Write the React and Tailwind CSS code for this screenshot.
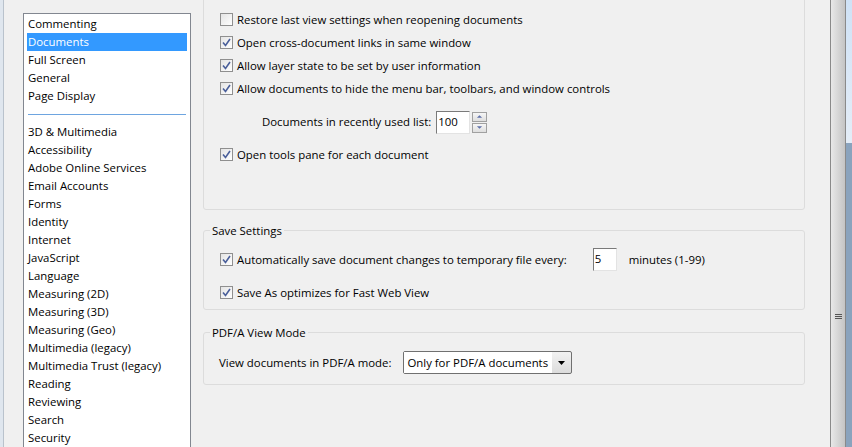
import React from "react";

const font = { fontFamily: '"Open Sans", "Noto Sans", "Liberation Sans", sans-serif' };

const top = ["Commenting", "Documents", "Full Screen", "General", "Page Display"];
const rest = [
  "3D & Multimedia", "Accessibility", "Adobe Online Services", "Email Accounts", "Forms",
  "Identity", "Internet", "JavaScript", "Language", "Measuring (2D)", "Measuring (3D)",
  "Measuring (Geo)", "Multimedia (legacy)", "Multimedia Trust (legacy)", "Reading",
  "Reviewing", "Search", "Security",
];

function Check({ on, children, className = "" }) {
  return (
    <div className={`flex items-center h-[23px] ${className}`}>
      <span className="w-[13px] h-[13px] shrink-0 border border-[#8f8f8f] bg-gradient-to-br from-[#e4e4e4] to-white flex items-center justify-center mr-[4px]">
        {on && (
          <svg width="9" height="9" viewBox="0 0 9 9">
            <path d="M1 4.5 L3.5 7.5 L8 1" fill="none" stroke="#4a5f9a" strokeWidth="1.6" />
          </svg>
        )}
      </span>
      <span>{children}</span>
    </div>
  );
}

export default function App() {
  return (
    <div style={font} className="w-[852px] h-[447px] bg-[#f0f0f0] text-[11.4px] text-black flex overflow-hidden">
      <div className="w-[4px] shrink-0 bg-[#dfe6ee] border-r border-[#b9c2cc]" />
      <div className="w-[19px] shrink-0" />
      <div className="w-[168px] shrink-0 mt-[13px] h-[460px] bg-white border border-[#828790] pt-[1px] px-[3px] leading-[18px]">
        {top.map((t) => (
          <div key={t} className={`px-[1px] ${t === "Documents" ? "bg-[#3399ff] text-white" : ""}`}>{t}</div>
        ))}
        <div className="h-[18px] flex items-center px-[1px]"><div className="h-px w-full bg-[#6ea5e0]" /></div>
        {rest.map((t) => (
          <div key={t} className="px-[1px]">{t}</div>
        ))}
      </div>
      <div className="w-[12px] shrink-0" />
      <div className="w-[602px] shrink-0 flex flex-col">
        <div className="h-[214px] shrink-0 -mt-[4px] border border-[#dcdcdc] rounded-b-[3px] pl-[16px] pt-[11px]">
          <Check>Restore last view settings when reopening documents</Check>
          <Check on>Open cross-document links in same window</Check>
          <Check on>Allow layer state to be set by user information</Check>
          <Check on>Allow documents to hide the menu bar, toolbars, and window controls</Check>
          <div className="flex items-center h-[24px] mt-[10px] pl-[42px]">
            <span className="mr-[5px]">Documents in recently used list:</span>
            <span className="w-[34px] h-[23px] border border-[#7a7a7a] border-r-[#e3e3e3] border-b-[#e3e3e3] bg-white pl-[1px] leading-[20px]">100</span>
            <span className="ml-[2px] flex flex-col gap-px">
              {["M1 4 L4 1 L7 4", "M1 1 L4 4 L7 1"].map((d, i) => (
                <span key={i} className="w-[15px] h-[10px] border border-[#a0a0a0] bg-gradient-to-b from-[#f6f6f6] to-[#dedede] flex items-center justify-center">
                  <svg width="7" height="5" viewBox="0 0 8 5"><path d={d} fill="#5e6fa8" /></svg>
                </span>
              ))}
            </span>
          </div>
          <Check on className="mt-[9px]">Open tools pane for each document</Check>
        </div>
        <div className="relative shrink-0 mt-[20px] h-[80px] border border-[#dcdcdc] rounded-[3px] pl-[16px] pt-[17px]">
          <span className="absolute -top-[9px] left-[6px] bg-[#f0f0f0] px-[2px]">Save Settings</span>
          <div className="flex items-center">
            <Check on>Automatically save document changes to temporary file every:</Check>
            <span className="ml-[26px] w-[24px] h-[23px] border border-[#7a7a7a] border-r-[#e3e3e3] border-b-[#e3e3e3] bg-white pl-[1px] leading-[20px]">5</span>
            <span className="ml-[12px]">minutes (1-99)</span>
          </div>
          <Check on className="mt-[10px]">Save As optimizes for Fast Web View</Check>
        </div>
        <div className="relative shrink-0 mt-[22px] h-[53px] border border-[#dcdcdc] rounded-[3px] pl-[15px] pt-[18px]">
          <span className="absolute -top-[9px] left-[6px] bg-[#f0f0f0] px-[2px]">PDF/A View Mode</span>
          <div className="flex items-center">
            <span>View documents in PDF/A mode:</span>
            <span className="ml-[12px] h-[23px] w-[169px] border border-[#707070] rounded-[2px] flex items-center bg-gradient-to-b from-[#f2f2f2] to-[#dcdcdc]">
              <span className="bg-white h-full flex items-center px-[3px] w-[148px] whitespace-nowrap">Only for PDF/A documents</span>
              <span className="flex-1 flex justify-center">
                <svg width="7" height="4" viewBox="0 0 7 4"><path d="M0 0 L7 0 L3.5 4Z" fill="#000" /></svg>
              </span>
            </span>
          </div>
        </div>
      </div>
      <div className="w-[25px] shrink-0" />
      <div className="w-px shrink-0 bg-[#8a8a8a]" />
      <div className="w-[14px] shrink-0 bg-gradient-to-r from-[#e8e8e8] via-[#d6d6d6] to-[#c4c4c4] flex justify-center">
        <div className="flex flex-col gap-px mt-[314px]">
          <div className="w-[7px] h-px bg-[#555]" />
          <div className="w-[7px] h-px bg-[#555]" />
          <div className="w-[7px] h-px bg-[#555]" />
        </div>
      </div>
      <div className="w-px shrink-0 bg-[#8a8a8a]" />
      <div className="w-[6px] shrink-0 flex flex-col">
        <div className="h-[143px] bg-gradient-to-b from-[#cfe2f6] to-[#e4edf7]" />
        <div className="flex-1 bg-[#8aa3bd]" />
      </div>
    </div>
  );
}
